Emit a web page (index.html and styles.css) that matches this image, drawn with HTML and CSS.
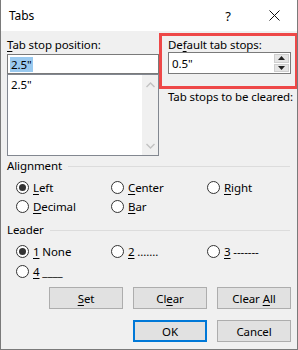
FILE: index.html
```html
<!DOCTYPE html>
<html lang="en">
<head>
    <meta charset="UTF-8">
    <meta name="viewport" content="width=device-width, initial-scale=1.0">
    <title>Tabs</title>
    <link rel="stylesheet" href="styles.css">
</head>
<body>

    <div class="window">
        <div class="titlebar">
            <span class="title">Tabs</span>
            <div class="caption-buttons">
                <span class="caption-btn">?</span>
                <span class="caption-btn">
                    <svg width="11" height="11" viewBox="0 0 11 11">
                        <path d="M0.5 0.5 L10.5 10.5 M10.5 0.5 L0.5 10.5" stroke="#111" stroke-width="1" fill="none"/>
                    </svg>
                </span>
            </div>
        </div>

        <div class="top">
            <div class="left-col">
                <div class="label"><u>T</u>ab stop position:</div>
                <div class="textbox"><span class="selected">2.5"</span></div>
                <div class="listbox">
                    <div class="list-items">
                        <div class="list-item">2.5"</div>
                    </div>
                    <div class="scrollbar">
                        <svg width="9" height="6" viewBox="0 0 9 6"><path d="M0.5 5 L4.5 1 L8.5 5" stroke="#c2c2c2" stroke-width="1.4" fill="none"/></svg>
                        <svg width="9" height="6" viewBox="0 0 9 6"><path d="M0.5 1 L4.5 5 L8.5 1" stroke="#c2c2c2" stroke-width="1.4" fill="none"/></svg>
                    </div>
                </div>
            </div>

            <div class="right-col">
                <div class="highlight">
                    <div class="label">De<u>f</u>ault tab stops:</div>
                    <div class="spinbox">
                        <span class="spin-value">0.5"</span>
                        <div class="spin-buttons">
                            <span class="spin-btn"><svg width="7" height="4" viewBox="0 0 7 4"><path d="M0 4 L3.5 0 L7 4 Z" fill="#222"/></svg></span>
                            <span class="spin-btn"><svg width="7" height="4" viewBox="0 0 7 4"><path d="M0 0 L7 0 L3.5 4 Z" fill="#222"/></svg></span>
                        </div>
                    </div>
                </div>
                <div class="label cleared">Tab stops to be cleared:</div>
            </div>
        </div>

        <div class="group-title">Alignment</div>
        <div class="radio-grid align-grid">
            <div class="radio"><span class="circle checked"></span><span><u>L</u>eft</span></div>
            <div class="radio"><span class="circle"></span><span><u>C</u>enter</span></div>
            <div class="radio"><span class="circle"></span><span><u>R</u>ight</span></div>
            <div class="radio"><span class="circle"></span><span><u>D</u>ecimal</span></div>
            <div class="radio"><span class="circle"></span><span><u>B</u>ar</span></div>
        </div>

        <div class="group-title leader-title">Leader</div>
        <div class="radio-grid leader-grid">
            <div class="radio"><span class="circle checked"></span><span><u>1</u> None</span></div>
            <div class="radio"><span class="circle"></span><span><u>2</u> .......</span></div>
            <div class="radio"><span class="circle"></span><span><u>3</u> -------</span></div>
            <div class="radio"><span class="circle"></span><span><u>4</u> ____</span></div>
        </div>

        <div class="button-row first-row">
            <button class="btn"><u>S</u>et</button>
            <button class="btn">Cl<u>e</u>ar</button>
            <button class="btn">Clear <u>A</u>ll</button>
        </div>
        <div class="button-row">
            <button class="btn default">OK</button>
            <button class="btn">Cancel</button>
        </div>
    </div>

</body>
</html>
```

FILE: styles.css
```css
* {
    box-sizing: border-box;
}

body {
    margin: 0;
    font-family: "Noto Sans", "Open Sans", sans-serif;
    font-size: 11.5px;
    letter-spacing: -0.1px;
    color: #000;
    background: #fff;
}

.window {
    width: 298px;
    height: 350px;
    background-color: #f0f0f0;
    border: 1px solid #7a7a7a;
    border-top: none;
    overflow: hidden;
}

u {
    text-decoration: underline;
    text-underline-offset: 2px;
    text-decoration-thickness: 1px;
}

/* --- Title bar --- */
.titlebar {
    height: 31px;
    background-color: #fff;
    display: flex;
    align-items: center;
    justify-content: space-between;
    padding-left: 8px;
}

.title {
    font-size: 12px;
}

.caption-buttons {
    display: flex;
    height: 100%;
}

.caption-btn {
    width: 46px;
    display: flex;
    align-items: center;
    justify-content: center;
    font-size: 13px;
}

/* --- Top area (positions / default stops) --- */
.top {
    display: grid;
    grid-template-columns: 152px 1fr;
    padding-left: 6px;
    height: 126px;
}

.label {
    line-height: 16px;
    white-space: nowrap;
}

.left-col {
    padding-top: 6px;
}

.left-col .label {
    margin-bottom: 1px;
}

.textbox {
    height: 20px;
    background: #fff;
    border: 1px solid #7a7a7a;
    padding-left: 2px;
    display: flex;
    align-items: center;
}

.selected {
    background-color: #99c9ef;
    padding: 0 1px;
    line-height: 15px;
}

.listbox {
    height: 82px;
    background: #fff;
    border: 1px solid #828790;
    display: flex;
}

.list-items {
    flex: 1;
    padding: 2px 0 0 3px;
}

.list-item {
    line-height: 16px;
}

.scrollbar {
    width: 16px;
    background-color: #f0f0f0;
    display: flex;
    flex-direction: column;
    justify-content: space-between;
    align-items: center;
    padding: 7px 0 6px;
}

.right-col {
    margin-right: -1px;
}

.highlight {
    margin-top: 2px;
    height: 56px;
    border: 3px solid #ee4848;
    padding: 1px 4px 0 6px;
}

.highlight .label {
    line-height: 15px;
}

.spinbox {
    height: 22px;
    background: #fff;
    border: 1px solid #7a7a7a;
    display: flex;
    align-items: center;
    padding-left: 3px;
}

.spin-value {
    flex: 1;
}

.spin-buttons {
    width: 17px;
    height: 100%;
    display: flex;
    flex-direction: column;
    padding: 1px;
    gap: 1px;
}

.spin-btn {
    flex: 1;
    background-color: #e5e5e5;
    border: 1px solid #cfcfcf;
    display: flex;
    align-items: center;
    justify-content: center;
}

.cleared {
    padding-left: 9px;
}

/* --- Alignment / Leader groups --- */
.group-title {
    display: flex;
    align-items: center;
    gap: 6px;
    line-height: 16px;
    padding: 0 7px 0 6px;
    margin-top: 1px;
}

.group-title::after {
    content: "";
    flex: 1;
    height: 1px;
    background-color: #dcdcdc;
}

.leader-title {
    margin-top: 6px;
}

.radio-grid {
    display: grid;
    grid-template-columns: 95px 96px 1fr;
    padding-left: 15px;
}

.align-grid {
    padding-top: 4px;
    grid-auto-rows: 19px;
}

.leader-grid {
    padding-top: 3px;
    grid-auto-rows: 20px;
}

.radio {
    display: flex;
    align-items: center;
    gap: 4px;
}

.circle {
    width: 13px;
    height: 13px;
    border: 1px solid #333;
    border-radius: 50%;
    background: #fff;
    display: flex;
    align-items: center;
    justify-content: center;
}

.circle.checked::after {
    content: "";
    width: 7px;
    height: 7px;
    border-radius: 50%;
    background-color: #333;
}

/* --- Buttons --- */
.button-row {
    display: flex;
    justify-content: flex-end;
    gap: 10px;
    padding-right: 6px;
    margin-top: 11px;
}

.button-row.first-row {
    margin-top: 6px;
}

.btn {
    width: 74px;
    height: 22px;
    font-family: inherit;
    font-size: 11.5px;
    letter-spacing: -0.1px;
    color: #000;
    background-color: #e1e1e1;
    border: 1px solid #adadad;
    padding: 0;
}

.btn.default {
    border: 2px solid #0078d7;
}
```
